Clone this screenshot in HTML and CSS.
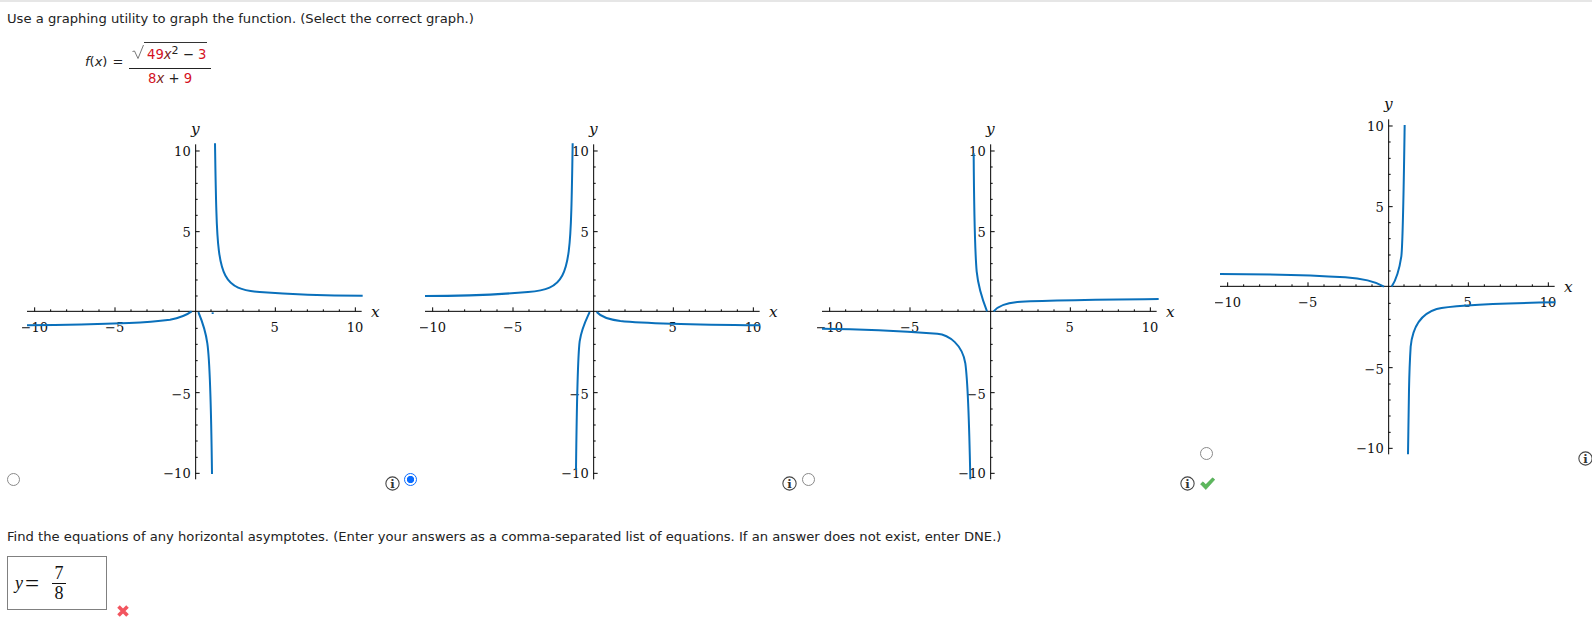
FILE: index.html
```html
<!DOCTYPE html>
<html lang="en">
<head>
<meta charset="utf-8">
<title>Graphing question</title>
<link rel="stylesheet" href="styles.css">
</head>
<body>
<div class="rule"></div>
<p class="prompt">Use a graphing utility to graph the function. (Select the correct graph.)</p>
<div class="formula">
  <span class="lhs"><i>f</i>(<i>x</i>) =</span>
  <div class="frac">
    <div class="num">
      <svg class="radical" viewBox="0 0 12 16"><path d="M0.5 7.5L2.5 7L6 14.5L11.5 1"/></svg>
      <span class="radicand"><b>49</b><i>x</i><sup>2</sup> − <b>3</b></span>
    </div>
    <div class="den"><b>8</b><i>x</i> + <b>9</b></div>
  </div>
</div>

<div class="graphs">
  <div class="choice">
    <span class="radio"></span>
    <svg class="plot" viewBox="0 0 1083 1092"><g transform="translate(521 580)">
      <path class="axis" d="M-506 0H498M0 -501V504"/>
      <path class="ticks" id="ticks" d="M-483 0v-12M-435 0v-6M-387 0v-6M-339 0v-6M-290 0v-6M-242 0v-12M-194 0v-6M-146 0v-6M-98 0v-6M-50 0v-6M46 0v-6M94 0v-6M142 0v-6M190 0v-6M239 0v-12M287 0v-6M335 0v-6M383 0v-6M431 0v-6M479 0v-12M0 -481h12M0 -433h6M0 -384h6M0 -336h6M0 -288h6M0 -239h12M0 -191h6M0 -143h6M0 -94h6M0 -46h6M0 51h6M0 99h6M0 148h6M0 196h6M0 244h12M0 293h6M0 341h6M0 389h6M0 438h6M0 486h12"/>
      <g class="xl"><text x="-484" y="62">−10</text><text x="-243" y="62">−5</text><text x="237" y="62">5</text><text x="478" y="62">10</text></g>
      <g class="yl"><text x="-15" y="-465">10</text><text x="-15" y="-224">5</text><text x="-15" y="262">−5</text><text x="-15" y="501">−10</text></g>
      <text class="var" x="526" y="16">x</text><text class="var" x="-14" y="-532">y</text>
      <path class="curve" d="M-506 42C-400 41 -300 39 -200 35C-160 33 -110 29 -77 25C-50 20 -27 11 -12 0"/>
      <path class="curve" d="M8 2C18 26 30 60 35 96C40 130 46 250 49 488"/>
      <path class="curve" d="M51 3V8"/>
      <path class="curve" d="M58 -504C59 -440 60 -370 62 -304C68 -100 85 -66 192 -58C290 -50 400 -47 501 -47"/>
    </g></svg>
    <svg class="info" viewBox="0 0 14 14"><circle cx="7" cy="7" r="6.2"/><text x="7" y="11.2">i</text></svg>
  </div>

  <div class="choice">
    <span class="radio radio-on"></span>
    <svg class="plot" viewBox="0 0 1083 1092"><g transform="translate(521 580)">
      <path class="axis" d="M-506 0H498M0 -501V504"/>
      <use href="#ticks"/>
      <g class="xl"><text x="-484" y="62">−10</text><text x="-243" y="62">−5</text><text x="237" y="62">5</text><text x="478" y="62">10</text></g>
      <g class="yl"><text x="-15" y="-465">10</text><text x="-15" y="-224">5</text><text x="-15" y="262">−5</text><text x="-15" y="501">−10</text></g>
      <text class="var" x="526" y="16">x</text><text class="var" x="-14" y="-532">y</text>
      <path class="curve" d="M-506 -46C-400 -46 -290 -50 -197 -58C-90 -66 -73 -100 -67 -304C-65 -370 -64 -440 -63 -504"/>
      <path class="curve" d="M-12 2C-22 24 -36 50 -42 90C-47 130 -51 300 -53 476"/>
      <path class="curve" d="M9 2C20 14 40 24 80 29C150 36 300 40 499 42"/>
    </g></svg>
    <svg class="info" viewBox="0 0 14 14"><circle cx="7" cy="7" r="6.2"/><text x="7" y="11.2">i</text></svg>
  </div>

  <div class="choice">
    <span class="radio"></span>
    <svg class="plot" viewBox="0 0 1083 1092"><g transform="translate(521 580)">
      <path class="axis" d="M-506 0H498M0 -501V504"/>
      <use href="#ticks"/>
      <g class="xl"><text x="-484" y="62">−10</text><text x="-243" y="62">−5</text><text x="237" y="62">5</text><text x="478" y="62">10</text></g>
      <g class="yl"><text x="-15" y="-465">10</text><text x="-15" y="-224">5</text><text x="-15" y="262">−5</text><text x="-15" y="501">−10</text></g>
      <text class="var" x="526" y="16">x</text><text class="var" x="-14" y="-532">y</text>
      <path class="curve" d="M-51 -474C-50 -330 -48 -190 -42 -120C-38 -80 -25 -36 -11 0"/>
      <path class="curve" d="M9 0C20 -14 40 -24 80 -28C150 -33 300 -35 504 -37"/>
      <path class="curve" d="M-506 52C-400 53 -280 58 -160 67C-125 70 -85 100 -76 156C-70 200 -64 350 -61 504"/>
    </g></svg>
    <svg class="info" viewBox="0 0 14 14"><circle cx="7" cy="7" r="6.2"/><text x="7" y="11.2">i</text></svg>
  </div>

  <div class="choice choice-tall">
    <div class="stack">
      <span class="radio"></span>
      <svg class="check" viewBox="0 0 15 13"><path d="M0.5 7L3 4.8L5.8 7.6L12.5 0.8L14.8 2.6L5.8 12.6Z"/></svg>
    </div>
    <svg class="plot" viewBox="0 0 1083 1092"><g transform="translate(521 580)">
      <path class="axis" d="M-506 0H498M0 -501V504"/>
      <use href="#ticks"/>
      <g class="xl"><text x="-484" y="62">−10</text><text x="-243" y="62">−5</text><text x="237" y="62">5</text><text x="478" y="62">10</text></g>
      <g class="yl"><text x="-15" y="-465">10</text><text x="-15" y="-224">5</text><text x="-15" y="262">−5</text><text x="-15" y="501">−10</text></g>
      <text class="var" x="526" y="16">x</text><text class="var" x="-14" y="-532">y</text>
      <path class="curve" d="M-506 -37C-400 -37 -250 -35 -130 -27C-80 -24 -40 -14 -14 1"/>
      <path class="curve" d="M9 1C20 -16 32 -50 38 -90C43 -130 46 -350 48 -484"/>
      <path class="curve" d="M58 504C59 440 60 370 61 311C62 260 63.500 220 66 181C71 130 92 84 144 68C175 60 280 52 499 48"/>
    </g></svg>
    <svg class="info" viewBox="0 0 14 14"><circle cx="7" cy="7" r="6.2"/><text x="7" y="11.2">i</text></svg>
  </div>
</div>

<p class="question">Find the equations of any horizontal asymptotes. (Enter your answers as a comma-separated list of equations. If an answer does not exist, enter DNE.)</p>
<div class="answer-row">
  <div class="answer">
    <span class="eq"><i>y</i><span class="op">=</span></span>
    <span class="ans-frac"><span class="ans-n">7</span><span class="ans-d">8</span></span>
  </div>
  <svg class="cross" viewBox="0 0 14 14"><path d="M2.500 2.500L11.500 11.500M11.500 2.500L2.500 11.500"/></svg>
</div>
</body>
</html>
```
FILE: styles.css
```css
html, body {
  margin: 0;
  padding: 0;
  background: #fff;
}
body {
  width: 1592px;
  height: 636px;
  overflow: hidden;
  font-family: "DejaVu Sans", Verdana, sans-serif;
  font-size: 13.15px;
  color: #222;
}
.rule {
  height: 2px;
  background: #e6e6e6;
}
.prompt {
  margin: 0;
  padding: 9px 0 0 7px;
  line-height: 16px;
}
.formula {
  display: flex;
  align-items: flex-start;
  height: 66px;
  margin-left: 85px;
}
.lhs {
  width: 44px;
  margin-top: 27px;
  line-height: 16px;
  font-size: 13px;
  word-spacing: 1px;
}
.frac {
  width: 82px;
  display: flex;
  flex-direction: column;
  font-size: 13.2px;
}
.frac b {
  font-weight: normal;
  color: #d5121f;
}
.frac i {
  color: #7a2020;
}
.num {
  display: flex;
  align-items: flex-end;
  height: 41px;
  padding-left: 3px;
  border-bottom: 1px solid #222;
}
.radical {
  width: 12px;
  height: 16px;
  margin-bottom: 8px;
  fill: none;
  stroke: #777;
  stroke-width: 1;
}
.radicand {
  border-top: 1px solid #333;
  width: 63px;
  line-height: 17px;
  height: 22px;
  padding-left: 3px;
  padding-top: 3px;
  box-sizing: border-box;
  margin-bottom: 4px;
  white-space: nowrap;
}
.radicand sup {
  font-size: 11px;
  line-height: 0;
  color: #222;
}
.den {
  text-align: center;
  line-height: 16px;
  padding-top: 2px;
}
.graphs {
  display: grid;
  grid-template-columns: repeat(4, 397.7px);
  align-items: end;
  height: 397px;
  padding-left: 6.5px;
}
.choice {
  display: flex;
  align-items: flex-end;
  height: 372px;
}
.radio {
  display: block;
  flex: none;
  width: 13px;
  height: 13px;
  box-sizing: border-box;
  border: 1.5px solid #8a8a8a;
  border-radius: 50%;
  margin: 0 2.5px 4.5px 0;
  background: #fff;
}
.radio-on {
  border: 1.5px solid #0a6cff;
  background: radial-gradient(circle, #0a6cff 0 3.3px, #fff 4px);
}
.plot {
  flex: none;
  display: block;
  width: 361px;
  height: 364px;
  margin: 0 1.5px 8px 0;
}
.axis, .ticks, .plot use {
  fill: none;
  stroke: #000;
  stroke-width: 3;
}
.curve {
  fill: none;
  stroke: #0a70bb;
  stroke-width: 6;
}
.plot text {
  font-family: "DejaVu Serif", serif;
  font-size: 39px;
  fill: #111;
}
.xl text {
  text-anchor: middle;
}
.yl text {
  text-anchor: end;
}
.plot .var {
  font-style: italic;
  font-size: 46px;
}
.info {
  flex: none;
  display: block;
  width: 15px;
  height: 15px;
  margin-bottom: -1px;
}
.info circle {
  fill: #fff;
  stroke: #444;
  stroke-width: 1;
}
.info text {
  font-family: "DejaVu Serif", serif;
  font-size: 11px;
  font-weight: bold;
  text-anchor: middle;
  fill: #333;
}
.choice-tall {
  height: 397px;
}
.choice-tall .plot {
  margin-bottom: 33px;
}
.choice-tall .info {
  margin-bottom: 24px;
}
.stack {
  flex: none;
  display: flex;
  flex-direction: column;
  gap: 17.5px;
  width: 15.5px;
}
.stack .radio {
  margin: 0;
}
.check {
  display: block;
  width: 15px;
  height: 13px;
  fill: #5cb85c;
  stroke: #3f9a44;
  stroke-width: 0.5;
}
.question {
  margin: 0;
  padding: 39px 0 0 7px;
  line-height: 16px;
}
.answer-row {
  display: flex;
  align-items: flex-start;
  margin: 11px 0 0 7px;
}
.answer {
  display: flex;
  align-items: center;
  box-sizing: border-box;
  width: 100px;
  height: 54px;
  border: 1px solid #808080;
  padding-left: 7px;
  font-family: "Liberation Serif", "Times New Roman", serif;
  font-size: 18px;
  color: #111;
}
.eq {
  display: flex;
  align-items: center;
  width: 37px;
  white-space: nowrap;
}
.op {
  margin-left: 2px;
  font-size: 25px;
  line-height: 1;
}
.ans-frac {
  display: flex;
  flex-direction: column;
  align-items: center;
  width: 14px;
  line-height: 19px;
}
.ans-n {
  align-self: stretch;
  text-align: center;
  border-bottom: 1px solid #111;
}
.cross {
  display: block;
  width: 14px;
  height: 14px;
  margin: 48px 0 0 9px;
  fill: none;
  stroke: #f2555f;
  stroke-width: 3.6;
}
```
